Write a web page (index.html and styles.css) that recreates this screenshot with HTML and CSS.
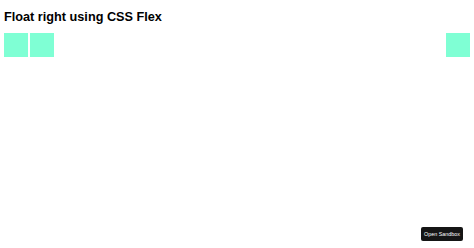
FILE: index.html
```html
<!DOCTYPE html>
<html>
<head>
<meta charset="utf-8">
<link rel="stylesheet" href="styles.css">
</head>
<body>
<h1 class="title">Float right using CSS Flex</h1>
<div class="row">
  <div class="box"></div>
  <div class="box"></div>
  <div class="box push"></div>
</div>
<a class="sandbox-btn">Open Sandbox</a>
</body>
</html>
```
FILE: styles.css
```css
html, body {
  background: #ffffff;
}
body {
  margin: 4px;
  font-family: "Liberation Sans", Arial, sans-serif;
}
.title {
  font-size: 12.7px;
  font-weight: bold;
  margin: 6.3px 0 8.3px;
  color: #000;
}
.row {
  display: flex;
  gap: 1.6px;
}
.box {
  width: 24px;
  height: 24px;
  background: #7fffd4;
}
.push {
  margin-left: auto;
}
.sandbox-btn {
  position: fixed;
  right: 11px;
  bottom: 7px;
  width: 42px;
  height: 14px;
  background: #151515;
  color: #ffffff;
  font-size: 5.4px;
  border-radius: 2px;
  display: flex;
  align-items: center;
  justify-content: center;
  font-family: "Liberation Sans", Arial, sans-serif;
}
```
